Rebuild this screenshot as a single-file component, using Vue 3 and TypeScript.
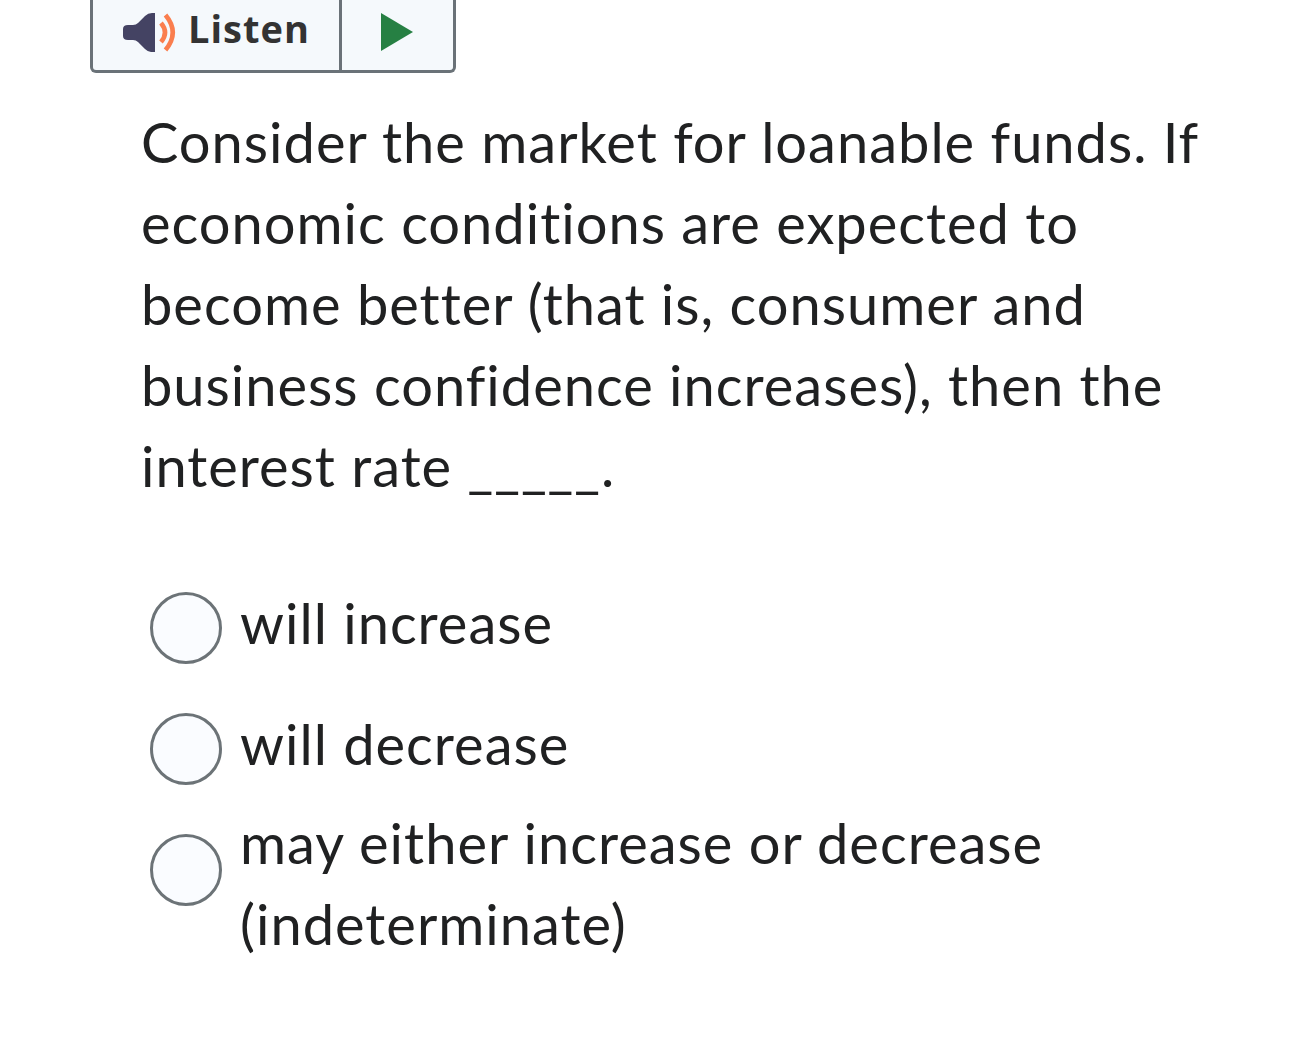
<script setup lang="ts">
import { ref } from 'vue'

const options: string[] = [
  'will increase',
  'will decrease',
  'may either increase or decrease (indeterminate)',
]
const answer = ref<string | null>(null)
</script>

<template>
  <main class="page">
    <div class="reader">
      <button type="button" class="listen">
        <svg class="speaker" viewBox="0 0 54 42" aria-hidden="true">
          <path d="M5 13H10Q13 13 15 11L22 4Q25 1 29 1H32V40H28Q25 40 22 37L15 30Q13 28 10 28H5Q0 28 0 24V17Q0 13 5 13Z" fill="#444363" />
          <path d="M38 11Q46 20.5 38 30M42.5 3Q57 20.5 42.5 38" fill="none" stroke="#fa7e4e" stroke-width="4.6" />
        </svg>
        <span>Listen</span>
      </button>
      <button type="button" class="play" aria-label="Play">
        <svg class="triangle" viewBox="0 0 32 38" aria-hidden="true">
          <path d="M0 0L32 19L0 38Z" fill="#268043" />
        </svg>
      </button>
    </div>
    <form class="question">
      <p id="prompt" class="prompt">
        Consider the market for loanable funds. If economic conditions are expected to become better (that is, consumer
        and business confidence increases), then the interest rate _____.
      </p>
      <div class="options" role="radiogroup" aria-labelledby="prompt">
        <label v-for="option in options" :key="option" class="option">
          <input v-model="answer" type="radio" name="answer" :value="option" />
          <span>{{ option }}</span>
        </label>
      </div>
    </form>
  </main>
</template>

<style>
body {
  background: #fff;
}
</style>

<style scoped>
.page {
  padding: 0 90px;
  color: #202122;
  font-family: Lato, sans-serif;
}
.reader {
  display: flex;
  box-sizing: border-box;
  width: 366px;
  height: 73px;
  border: 3px solid #6a7278;
  border-top: 0;
  border-radius: 0 0 6px 6px;
  background: #f5f9fc;
}
button {
  display: flex;
  align-items: flex-start;
  margin: 0;
  border: 0;
  background: none;
  cursor: pointer;
}
.listen {
  flex: 1;
  gap: 11px;
  padding: 0 0 0 30px;
  color: #333;
  font: bold 38px/56px "Open Sans", sans-serif;
  letter-spacing: 1px;
}
.speaker {
  flex: none;
  width: 54px;
  height: 42px;
  margin-top: 12px;
}
.play {
  justify-content: center;
  width: 114px;
  padding: 13px 2px 0 0;
  border-left: 3px solid #6a7278;
}
.triangle {
  width: 32px;
  height: 38px;
}
.question {
  margin-left: 51px;
}
.prompt {
  margin: 28px 0 76px;
  font-size: 56px;
  line-height: 81px;
  letter-spacing: 1px;
}
.options {
  display: flex;
  flex-direction: column;
  padding-left: 9px;
}
.option {
  display: flex;
  align-items: flex-start;
  min-height: 121px;
  font-size: 56px;
  line-height: 81px;
  letter-spacing: 1px;
}
input {
  appearance: none;
  flex: none;
  box-sizing: border-box;
  width: 72px;
  height: 72px;
  margin: 10px 18px 0 0;
  border: 3px solid #6c7377;
  border-radius: 50%;
  background: #fafcff;
}
input:checked {
  box-shadow: inset 0 0 0 16px #fafcff;
  background: #202122;
}
.option:last-child {
  margin-top: -22px;
}
.option:last-child input {
  margin-top: 32px;
}
</style>
